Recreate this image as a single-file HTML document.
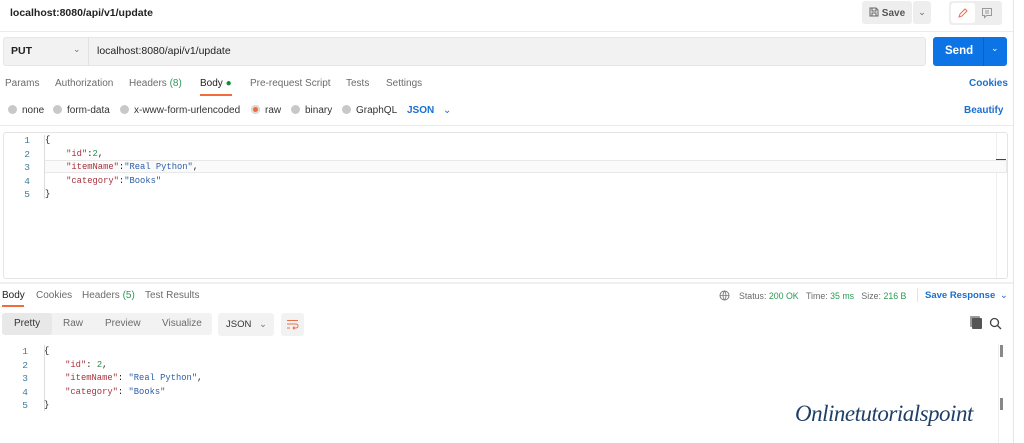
<!DOCTYPE html>
<html><head><style>
*{margin:0;padding:0;box-sizing:border-box}
body{width:1024px;height:443px;background:#fff;font-family:"Liberation Sans",sans-serif;position:relative;overflow:hidden;color:#212121}
.a{position:absolute;white-space:nowrap}
.mono{font-family:"Liberation Mono",monospace;font-size:8.8px}
.k{color:#a8323e}.s{color:#2d5fa8}.n{color:#2b8a4f}
.ln{color:#3b7d9e;width:24px;text-align:right;font-size:9.5px}
.g{color:#6b6b6b}
.rd{display:inline-block;width:9px;height:9px;border-radius:50%;background:#c8c8c8;vertical-align:-1px;margin-right:5px}
</style></head><body>
<div class="a" style="left:1013px;top:0;width:1px;height:443px;background:#e6e6e6"></div>
<div class="a" style="left:10px;top:7px;font-size:10.5px;font-weight:bold;color:#222">localhost:8080/api/v1/update</div>
<div class="a" style="left:862px;top:1px;width:50px;height:23px;background:#eee;border-radius:3px"></div>
<div class="a" style="left:869px;top:7px;font-size:10px;color:#555"><svg width="10" height="10" viewBox="0 0 10 10" style="vertical-align:-1px"><path d="M1 1h6l2 2v6H1z M3 1v3h4V1 M3 9V6h4v3" fill="none" stroke="#666" stroke-width="1"/></svg> <b>Save</b></div>
<div class="a" style="left:913px;top:1px;width:18px;height:23px;background:#eee;border-radius:3px;font-size:9px;color:#666;text-align:center;line-height:23px">⌄</div>
<div class="a" style="left:949px;top:1px;width:53px;height:24px;background:#eee;border-radius:3px"></div>
<div class="a" style="left:951px;top:3px;width:24px;height:20px;background:#fff;border-radius:3px"></div>
<svg class="a" style="left:957px;top:7px" width="12" height="12" viewBox="0 0 12 12"><path d="M2 10l1-3 5-5 2 2-5 5z" fill="none" stroke="#e8704a" stroke-width="1"/></svg>
<svg class="a" style="left:981px;top:7px" width="12" height="12" viewBox="0 0 12 12"><path d="M1.5 1.5h9v7h-5l-2 2v-2h-2z M4 4h4 M4 6h4" fill="none" stroke="#999" stroke-width="1"/></svg>
<div class="a" style="left:0;top:31px;width:1013px;height:1px;background:#ececec"></div>
<div class="a" style="left:3px;top:37px;width:923px;height:29px;background:#f2f2f2;border:1px solid #e6e6e6;border-radius:3px"></div>
<div class="a" style="left:88px;top:37px;width:1px;height:29px;background:#e2e2e2"></div>
<div class="a" style="left:11px;top:45px;font-size:10.5px;font-weight:bold">PUT</div>
<div class="a" style="left:73px;top:44px;font-size:9px;color:#777">⌄</div>
<div class="a" style="left:97px;top:45px;font-size:10.5px;color:#222">localhost:8080/api/v1/update</div>
<div class="a" style="left:933px;top:37px;width:74px;height:29px;background:#0c74e4;border-radius:3px"></div>
<div class="a" style="left:983px;top:37px;width:1px;height:29px;background:#0a62c2"></div>
<div class="a" style="left:945px;top:45px;font-size:11.5px;font-weight:bold;color:#fff">Send</div>
<div class="a" style="left:991px;top:43px;font-size:9px;color:#fff">⌄</div>
<div class="a g" style="top:78px;left:5px;font-size:10px">Params</div>
<div class="a g" style="top:78px;left:55px;font-size:10px">Authorization</div>
<div class="a g" style="top:78px;left:129px;font-size:10px">Headers <span style="color:#2b9a55">(8)</span></div>
<div class="a" style="top:78px;left:200px;font-size:10px;color:#222">Body <span style="color:#0f8a3a">●</span></div>
<div class="a" style="left:200px;top:94px;width:32px;height:2px;background:#f26b3a"></div>
<div class="a g" style="top:78px;left:250px;font-size:10px">Pre-request Script</div>
<div class="a g" style="top:78px;left:346px;font-size:10px">Tests</div>
<div class="a g" style="top:78px;left:386px;font-size:10px">Settings</div>
<div class="a" style="top:78px;left:969px;font-size:10px;color:#1b6fd0;font-weight:bold">Cookies</div>
<div class="a" style="top:105px;left:8px;font-size:10px;color:#333"><span class="rd"></span>none</div>
<div class="a" style="top:105px;left:53px;font-size:10px;color:#333"><span class="rd"></span>form-data</div>
<div class="a" style="top:105px;left:120px;font-size:10px;color:#333"><span class="rd"></span>x-www-form-urlencoded</div>
<div class="a" style="top:105px;left:251px;font-size:10px;color:#333"><span class="rd" style="background:#f26b3a;box-shadow:0 0 0 2px #ddd inset"></span>raw</div>
<div class="a" style="top:105px;left:291px;font-size:10px;color:#333"><span class="rd"></span>binary</div>
<div class="a" style="top:105px;left:342px;font-size:10px;color:#333"><span class="rd"></span>GraphQL</div>
<div class="a" style="top:105px;left:407px;font-size:10px;color:#1b6fd0;font-weight:bold">JSON <span style="font-weight:normal;margin-left:6px">⌄</span></div>
<div class="a" style="top:105px;left:964px;font-size:10px;color:#1b6fd0;font-weight:bold">Beautify</div>
<div class="a" style="left:0;top:125px;width:1013px;height:1px;background:#ececec"></div>
<div class="a" style="left:3px;top:132px;width:1005px;height:147px;border:1px solid #e4e4e4;border-radius:3px"></div>
<div class="a" style="left:996px;top:133px;width:1px;height:145px;background:#eee"></div>
<div class="a" style="left:996px;top:159px;width:10px;height:1px;background:#444"></div>
<div class="a" style="left:44px;top:160px;width:963px;height:13px;border:1px solid #e8e8e8;background:#fafafa"></div>
<div class="a" style="left:44px;top:135px;width:1px;height:64px;background:#ddd"></div>
<div class="a mono" style="left:6px;top:134px;line-height:13.5px">
<div style="display:flex"><div class="ln">1</div><div style="margin-left:15px">{</div></div>
<div style="display:flex"><div class="ln">2</div><div style="margin-left:15px">&nbsp;&nbsp;&nbsp;&nbsp;<span class="k">"id"</span>:<span class="n">2</span>,</div></div>
<div style="display:flex"><div class="ln">3</div><div style="margin-left:15px">&nbsp;&nbsp;&nbsp;&nbsp;<span class="k">"itemName"</span>:<span class="s">"Real Python"</span>,</div></div>
<div style="display:flex"><div class="ln">4</div><div style="margin-left:15px">&nbsp;&nbsp;&nbsp;&nbsp;<span class="k">"category"</span>:<span class="s">"Books"</span></div></div>
<div style="display:flex"><div class="ln">5</div><div style="margin-left:15px">}</div></div>
</div>
<div class="a" style="left:0;top:282px;width:1013px;height:2px;background:#f0f0f0"></div>
<div class="a" style="top:290px;left:2px;font-size:10px;color:#222">Body</div>
<div class="a" style="left:2px;top:305px;width:22px;height:2px;background:#f26b3a"></div>
<div class="a g" style="top:290px;left:36px;font-size:10px">Cookies</div>
<div class="a g" style="top:290px;left:82px;font-size:10px">Headers <span style="color:#2b9a55">(5)</span></div>
<div class="a g" style="top:290px;left:145px;font-size:10px">Test Results</div>
<svg class="a" style="left:719px;top:290px" width="11" height="11" viewBox="0 0 11 11"><circle cx="5.5" cy="5.5" r="4.5" fill="none" stroke="#777"/><path d="M1 5.5h9M5.5 1c-2 2.5-2 6.5 0 9M5.5 1c2 2.5 2 6.5 0 9" fill="none" stroke="#777" stroke-width=".8"/></svg>
<div class="a g" style="top:291px;left:739px;font-size:8.8px">Status: <span style="color:#2b9a55">200 OK</span>&nbsp;&nbsp;&nbsp;Time: <span style="color:#2b9a55">35 ms</span>&nbsp;&nbsp;&nbsp;Size: <span style="color:#2b9a55">216 B</span></div>
<div class="a" style="left:917px;top:288px;width:1px;height:14px;background:#e4e4e4"></div>
<div class="a" style="top:290px;left:925px;font-size:9.5px;color:#1b6fd0;font-weight:bold">Save Response <span style="font-weight:normal;margin-left:2px">⌄</span></div>
<div class="a" style="left:2px;top:313px;width:210px;height:22px;background:#f2f2f2;border-radius:3px"></div>
<div class="a" style="left:2px;top:313px;width:50px;height:22px;background:#e8e8e8;border-radius:3px"></div>
<div class="a" style="top:318px;left:14px;font-size:10px;color:#333">Pretty</div>
<div class="a g" style="top:318px;left:63px;font-size:10px">Raw</div>
<div class="a g" style="top:318px;left:105px;font-size:10px">Preview</div>
<div class="a g" style="top:318px;left:162px;font-size:10px">Visualize</div>
<div class="a" style="left:218px;top:313px;width:56px;height:23px;background:#f2f2f2;border-radius:3px"></div>
<div class="a" style="top:319px;left:226px;font-size:9.5px;color:#333">JSON <span style="color:#777;margin-left:5px">⌄</span></div>
<div class="a" style="left:281px;top:313px;width:23px;height:23px;background:#f2f2f2;border-radius:3px"></div>
<svg class="a" style="left:286px;top:318px" width="13" height="13" viewBox="0 0 13 13"><path d="M1 2.5h11M1 6h9a2 2 0 0 1 0 4H7M8.5 8.5L7 10l1.5 1.5M1 10h3" fill="none" stroke="#e8704a" stroke-width="1"/></svg>
<div class="a" style="left:972px;top:318px;width:10px;height:11px;background:#555;border-radius:1px;box-shadow:-2px -2px 0 #999"></div>
<svg class="a" style="left:989px;top:317px" width="13" height="13" viewBox="0 0 13 13"><circle cx="5.5" cy="5.5" r="4" fill="none" stroke="#444" stroke-width="1.3"/><path d="M8.5 8.5L12 12" stroke="#444" stroke-width="1.3"/></svg>
<div class="a" style="left:44px;top:345px;width:1px;height:66px;background:#ddd"></div>
<div class="a mono" style="left:4px;top:345px;line-height:13.5px">
<div style="display:flex"><div class="ln">1</div><div style="margin-left:16px">{</div></div>
<div style="display:flex"><div class="ln">2</div><div style="margin-left:16px">&nbsp;&nbsp;&nbsp;&nbsp;<span class="k">"id"</span>: <span class="n">2</span>,</div></div>
<div style="display:flex"><div class="ln">3</div><div style="margin-left:16px">&nbsp;&nbsp;&nbsp;&nbsp;<span class="k">"itemName"</span>: <span class="s">"Real Python"</span>,</div></div>
<div style="display:flex"><div class="ln">4</div><div style="margin-left:16px">&nbsp;&nbsp;&nbsp;&nbsp;<span class="k">"category"</span>: <span class="s">"Books"</span></div></div>
<div style="display:flex"><div class="ln">5</div><div style="margin-left:16px">}</div></div>
</div>
<div class="a" style="left:998px;top:344px;width:1px;height:99px;background:#eee"></div>
<div class="a" style="left:1000px;top:345px;width:3px;height:12px;background:#888"></div>
<div class="a" style="left:1000px;top:398px;width:3px;height:12px;background:#888"></div>
<div class="a" style="left:795px;top:401px;font-family:'Liberation Serif',serif;font-style:italic;font-size:23px;color:#1f3f66;letter-spacing:-0.5px">Onlinetutorialspoint</div>
</body></html>
